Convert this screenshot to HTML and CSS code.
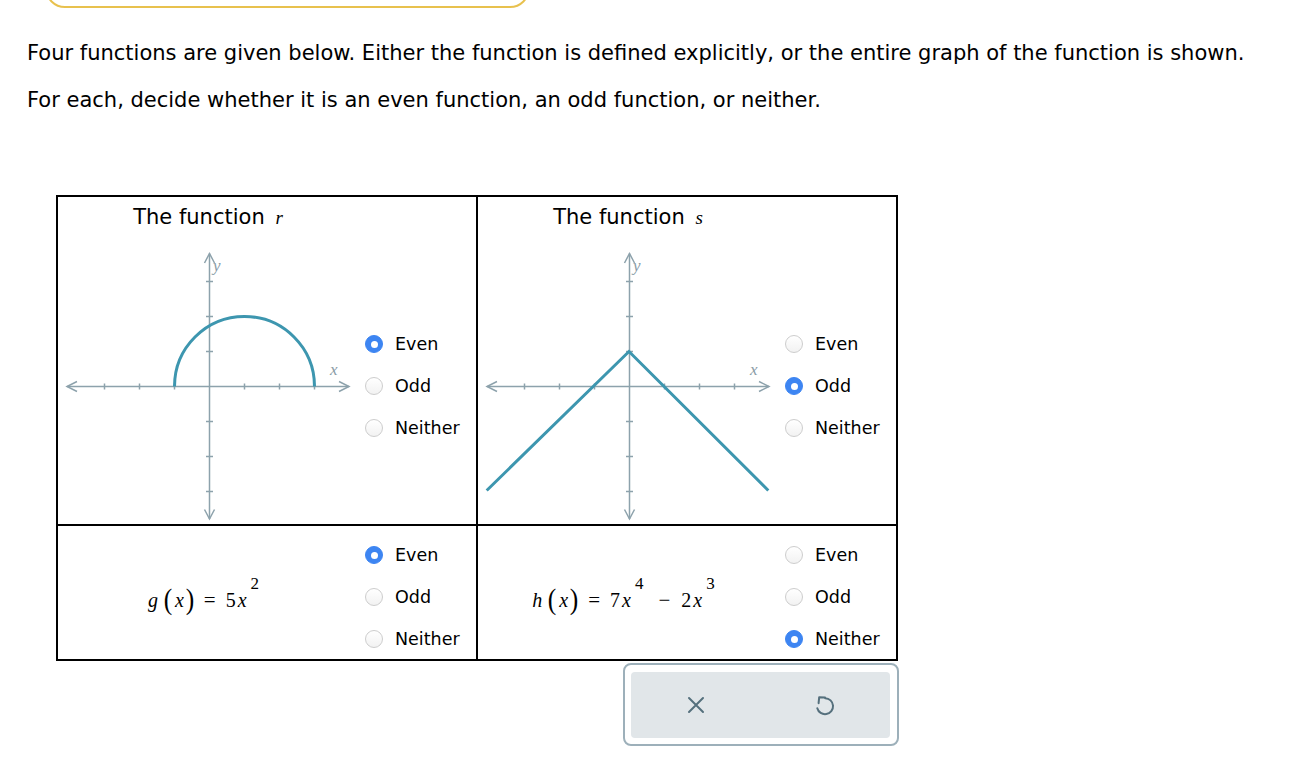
FILE: index.html
```html
<!DOCTYPE html>
<html>
<head>
<meta charset="utf-8">
<link rel="stylesheet" href="styles.css">
</head>
<body>
<div class="topbox"></div>
<div class="content">
  <p class="intro first">Four functions are given below. Either the function is defined explicitly, or the entire graph of the function is shown.</p>
  <p class="intro">For each, decide whether it is an even function, an odd function, or neither.</p>

  <div class="grid">
    <div class="cell graph-cell left top">
      <div class="title">The function <span class="fvar">r</span></div>
      <div class="row">
        <svg class="plot" width="292" height="274" viewBox="0 0 292 274">
          <g class="axes">
            <line x1="5" y1="137.5" x2="287" y2="137.5"/>
            <line x1="147.5" y1="4.5" x2="147.5" y2="270"/>
            <polyline points="15,132.5 5,137.5 15,142.5"/>
            <polyline points="277,132.5 287,137.5 277,142.5"/>
            <polyline points="142.5,14 147.5,4.5 152.5,14"/>
            <polyline points="142.5,260.5 147.5,270 152.5,260.5"/>
            <path d="M42.5 134.5V140.5M77.5 134.5V140.5M112.5 134.5V140.5M182.5 134.5V140.5M217.5 134.5V140.5M252.5 134.5V140.5"/>
            <path d="M144 32.5H151M144 67.5H151M144 102.5H151M144 172.5H151M144 207.5H151M144 242.5H151"/>
          </g>
          <text class="alabel" x="268" y="126">x</text>
          <text class="alabel" x="151" y="22">y</text>
          <path class="curve" d="M112.5 137.5 A70 70 0 0 1 252.5 137.5"/>
        </svg>
        <div class="radios">
          <div class="opt"><span class="radio on"></span><span class="lbl">Even</span></div>
          <div class="opt"><span class="radio"></span><span class="lbl">Odd</span></div>
          <div class="opt"><span class="radio"></span><span class="lbl">Neither</span></div>
        </div>
      </div>
    </div>

    <div class="cell graph-cell top">
      <div class="title">The function <span class="fvar">s</span></div>
      <div class="row">
        <svg class="plot" width="292" height="274" viewBox="0 0 292 274">
          <g class="axes">
            <line x1="5" y1="137.5" x2="287" y2="137.5"/>
            <line x1="147.5" y1="4.5" x2="147.5" y2="270"/>
            <polyline points="15,132.5 5,137.5 15,142.5"/>
            <polyline points="277,132.5 287,137.5 277,142.5"/>
            <polyline points="142.5,14 147.5,4.5 152.5,14"/>
            <polyline points="142.5,260.5 147.5,270 152.5,260.5"/>
            <path d="M42.5 134.5V140.5M77.5 134.5V140.5M112.5 134.5V140.5M182.5 134.5V140.5M217.5 134.5V140.5M252.5 134.5V140.5"/>
            <path d="M144 32.5H151M144 67.5H151M144 102.5H151M144 172.5H151M144 207.5H151M144 242.5H151"/>
          </g>
          <text class="alabel" x="268" y="126">x</text>
          <text class="alabel" x="151" y="22">y</text>
          <polyline class="curve" points="4.7,241.5 147,102.5 286.3,241.5"/>
        </svg>
        <div class="radios">
          <div class="opt"><span class="radio"></span><span class="lbl">Even</span></div>
          <div class="opt"><span class="radio on"></span><span class="lbl">Odd</span></div>
          <div class="opt"><span class="radio"></span><span class="lbl">Neither</span></div>
        </div>
      </div>
    </div>

    <div class="cell formula-cell left">
      <div class="formula">
        <span class="mi">g</span><span class="paren lp">(</span><span class="mi">x</span><span class="paren rp">)</span><span class="mo">=</span><span class="mn">5</span><span class="mi xi">x</span><span class="sup">2</span>
      </div>
      <div class="radios low">
        <div class="opt"><span class="radio on"></span><span class="lbl">Even</span></div>
        <div class="opt"><span class="radio"></span><span class="lbl">Odd</span></div>
        <div class="opt"><span class="radio"></span><span class="lbl">Neither</span></div>
      </div>
    </div>

    <div class="cell formula-cell">
      <div class="formula">
        <span class="mi">h</span><span class="paren lp">(</span><span class="mi">x</span><span class="paren rp">)</span><span class="mo">=</span><span class="mn">7</span><span class="mi xi">x</span><span class="sup">4</span><span class="mo minus">&#8722;</span><span class="mn">2</span><span class="mi xi">x</span><span class="sup">3</span>
      </div>
      <div class="radios low">
        <div class="opt"><span class="radio"></span><span class="lbl">Even</span></div>
        <div class="opt"><span class="radio"></span><span class="lbl">Odd</span></div>
        <div class="opt"><span class="radio on"></span><span class="lbl">Neither</span></div>
      </div>
    </div>
  </div>

  <div class="actions">
    <div class="panel">
      <div class="panel-inner">
        <button class="btn" aria-label="Clear">
          <svg width="18" height="18" viewBox="0 0 18 18"><path d="M2 2L16 16M16 2L2 16"/></svg>
        </button>
        <button class="btn" aria-label="Undo">
          <svg width="20" height="22" viewBox="0 0 20 22"><path d="M10.2 4.2 A8 8 0 1 1 2.3 14.2"/><path d="M3.6 9.2L4.2 3.2L10 3.6"/></svg>
        </button>
      </div>
    </div>
  </div>
</div>
</body>
</html>
```

FILE: styles.css
```css
html, body {
  margin: 0;
  padding: 0;
  background: #ffffff;
}
body {
  font-family: "DejaVu Sans", Verdana, sans-serif;
  color: #000;
}
.topbox {
  box-sizing: border-box;
  margin-left: 45px;
  width: 485px;
  height: 40px;
  margin-top: -32px;
  border: 2px solid #e8c14e;
  border-radius: 22px;
}
.content {
  padding: 0 27px;
}
.intro {
  margin: 20px 0 0;
  font-size: 21px;
  line-height: 27px;
  white-space: nowrap;
}
.intro.first {
  margin-top: 32px;
}
.grid {
  margin: 81px 0 0 29px;
  display: grid;
  grid-template-columns: 420px 418px;
  grid-template-rows: 329px 133px;
  width: 842px;
  box-sizing: border-box;
  border: 2px solid #000;
}
.cell {
  box-sizing: border-box;
}
.cell.left {
  border-right: 2px solid #000;
}
.cell.top {
  border-bottom: 2px solid #000;
}
.graph-cell {
  padding: 7px 0 0 4px;
}
.title {
  width: 292px;
  text-align: center;
  font-size: 21px;
  line-height: 26px;
}
.fvar {
  font-family: "Liberation Serif", "Times New Roman", serif;
  font-style: italic;
  font-size: 19px;
  margin-left: 4px;
}
.row {
  display: flex;
  align-items: center;
  margin-top: 18px;
}
.plot {
  display: block;
  flex: none;
}
.axes {
  stroke: #8da2ac;
  stroke-width: 1.5;
  fill: none;
}
.alabel {
  font-family: "Liberation Serif", "Times New Roman", serif;
  font-style: italic;
  font-size: 17px;
  fill: #8a9ca6;
}
.curve {
  fill: none;
  stroke: #3d96af;
  stroke-width: 3;
}
.radios {
  margin-left: 11px;
  display: flex;
  flex-direction: column;
}
.radios.low {
  padding-top: 8px;
}
.opt {
  height: 42px;
  display: flex;
  align-items: center;
}
.radio {
  box-sizing: border-box;
  width: 18px;
  height: 18px;
  border-radius: 50%;
  border: 1px solid #cdcdcd;
  background: linear-gradient(#ffffff, #f2f2f2);
  display: flex;
  align-items: center;
  justify-content: center;
  flex: none;
}
.radio.on {
  background: #3d85f2;
  border-color: #3d85f2;
}
.radio.on::after {
  content: "";
  width: 7px;
  height: 7px;
  border-radius: 50%;
  background: #fff;
}
.lbl {
  margin-left: 12px;
  font-size: 17.5px;
}
.formula-cell {
  display: flex;
  align-items: flex-start;
  padding-left: 4px;
}
.formula {
  box-sizing: border-box;
  width: 292px;
  padding-right: 9px;
  flex: none;
  margin-top: 38px;
  height: 40px;
  line-height: 40px;
  text-align: center;
  font-family: "Liberation Serif", "Times New Roman", serif;
  font-size: 20px;
  white-space: nowrap;
}
.mi {
  font-style: italic;
}
.xi {
  margin-left: 2px;
}
.paren {
  font-size: 30px;
  vertical-align: -2px;
  display: inline-block;
  transform: scaleX(0.85);
}
.lp {
  margin: 0 2px 0 5px;
}
.rp {
  margin: 0 0 0 1px;
}
.mo {
  margin: 0 10px 0 9px;
  font-size: 21px;
}
.mo.minus {
  margin: 0 11px 0 15px;
}
.sup {
  font-size: 17px;
  vertical-align: 18px;
  margin-left: 4px;
}
.actions {
  margin: 2px 0 0 596px;
}
.panel {
  box-sizing: border-box;
  width: 276px;
  height: 83px;
  border: 2px solid #9db0ba;
  border-radius: 8px;
  padding: 7px 7px 6px 6px;
}
.panel-inner {
  height: 100%;
  display: flex;
  background: #e1e6e9;
  border-radius: 4px;
}
.btn {
  flex: 1;
  border: none;
  background: transparent;
  padding: 0;
  display: flex;
  align-items: center;
  justify-content: center;
}
.btn svg {
  display: block;
  fill: none;
  stroke: #55707d;
  stroke-width: 2;
  stroke-linecap: round;
  stroke-linejoin: round;
}
```
